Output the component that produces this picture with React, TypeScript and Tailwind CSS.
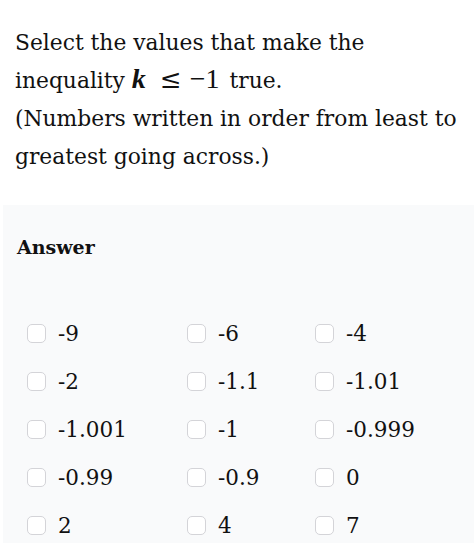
const options = [
  "-9", "-6", "-4",
  "-2", "-1.1", "-1.01",
  "-1.001", "-1", "-0.999",
  "-0.99", "-0.9", "0",
  "2", "4", "7",
];

export default function App() {
  return (
    <div className="w-[474px] h-[547px] bg-white overflow-hidden text-[#111]" style={{ fontFamily: '"DejaVu Serif", Georgia, serif' }}>
      <div className="pl-[15px] pr-2 pt-[24px] text-[21.8px] leading-[38px]">
        <p>Select the values that make the</p>
        <p className="h-[38px]">
          inequality{" "}
          <span className="text-[28px] leading-[0] italic" style={{ fontFamily: '"Liberation Serif", serif' }}>
            <span className="font-bold">k</span>
            <span className="not-italic text-[26px] ml-[14px] mr-[8px]" style={{ fontFamily: '"DejaVu Serif", serif' }}>≤</span>
            <span className="not-italic">−1</span>
          </span>
          <span className="ml-[10px]">true.</span>
        </p>
        <p>(Numbers written in order from least to</p>
        <p>greatest going across.)</p>
      </div>

      <div className="ml-[3px] mt-[29px] h-[338px] bg-[#f9fafb] pt-[28px]">
        <h2 className="pl-[14px] text-[19px] font-bold leading-[28px]">Answer</h2>
        <div className="mt-[63px] pl-[24px] grid grid-cols-[160px_128px_1fr] gap-y-[29px]">
          {options.map((o, i) => (
            <label key={i} className="flex items-center h-[19px] gap-[12px]">
              <span className="w-[19px] h-[19px] rounded-[5px] border border-[#d4d4d8] bg-white shrink-0" />
              <span className="text-[21.5px] leading-none">{o}</span>
            </label>
          ))}
        </div>
      </div>
    </div>
  );
}
